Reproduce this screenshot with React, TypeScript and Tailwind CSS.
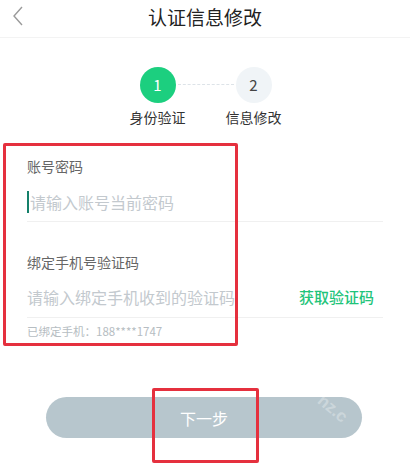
import React from "react";

const font = { fontFamily: '"Noto Sans CJK SC", "Noto Sans", sans-serif' };

const Step = ({ num, label, active }: { num: number; label: string; active?: boolean }) => (
    <div className="flex flex-col items-center w-[60px]">
        <div
            className={
                active
                    ? "w-9 h-9 rounded-full bg-[#1ccf7f] text-white flex items-center justify-center text-[15px]"
                    : "w-9 h-9 rounded-full bg-[#f0f4f7] text-[#444] flex items-center justify-center text-[15px]"
            }
        >
            {num}
        </div>
        <div className="mt-[4px] text-[14px] leading-[20px] text-[#333] whitespace-nowrap">{label}</div>
    </div>
);

export default function App() {
    return (
        <div className="relative w-[410px] h-[466px] bg-white overflow-hidden" style={font}>
            {/* header */}
            <div className="relative h-[38px] flex items-center justify-center border-b border-[#f3f3f3]">
                <svg className="absolute left-[11px] top-[5px]" width="14" height="22" viewBox="0 0 14 22">
                    <path d="M11 2 L3 11 L11 20" fill="none" stroke="#9a9a9a" strokeWidth="1.4" />
                </svg>
                <span className="text-[19px] text-[#222] leading-none -mt-[5px]">认证信息修改</span>
            </div>

            {/* stepper */}
            <div className="flex justify-center items-start mt-[29px] ml-[1px]">
                <Step num={1} label="身份验证" active />
                <div className="relative z-0 w-[56px] -mx-[10px] mt-[17px] border-t-[1.5px] border-dashed border-[#dde3e8]" />
                <Step num={2} label="信息修改" />
            </div>

            {/* form */}
            <div className="mt-[29px] pl-[27px] pr-[27px]">
                <div className="text-[14px] leading-[20px] text-[#666]">账号密码</div>
                <div className="h-[46px] pt-[6px] flex items-center border-b border-[#f0f0f0]">
                    <span className="w-[2px] h-[22px] bg-[#15806a] mr-[1px]" />
                    <span className="text-[16px] leading-[22px] text-[#c3c9ce]">请输入账号当前密码</span>
                </div>

                <div className="mt-[30px] text-[14px] leading-[20px] text-[#666]">绑定手机号验证码</div>
                <div className="h-[46px] pt-[4px] flex items-center justify-between border-b border-[#f0f0f0]">
                    <span className="text-[16px] leading-[22px] text-[#c3c9ce]">请输入绑定手机收到的验证码</span>
                    <span className="text-[15px] leading-[22px] font-medium text-[#1fc47a] mr-[9px] mt-[1px]">获取验证码</span>
                </div>
                <div className="mt-[3px] text-[11.5px] leading-[20px] text-[#b6bdc2]">已绑定手机：188****1747</div>
            </div>

            {/* button */}
            <div className="mt-[56px] flex justify-center">
                <div className="w-[316px] h-[41px] rounded-full bg-[#b7c6cd] flex items-center justify-center text-white text-[16px] ml-[-2px]">
                    下一步
                </div>
            </div>

            {/* watermark */}
            <div className="absolute left-[316px] top-[396px] rotate-[40deg] text-white/30 text-[17px] font-bold" style={{ fontFamily: '"Liberation Sans", sans-serif' }}>
                nz.c
            </div>

            {/* annotation boxes */}
            <div className="absolute left-[3px] top-[143px] w-[235px] h-[203px] border-[3px] border-[#e5303e] rounded-[2px]" />
            <div className="absolute left-[152px] top-[388px] w-[107px] h-[75px] border-[3px] border-[#e5303e] rounded-[2px]" />
        </div>
    );
}
